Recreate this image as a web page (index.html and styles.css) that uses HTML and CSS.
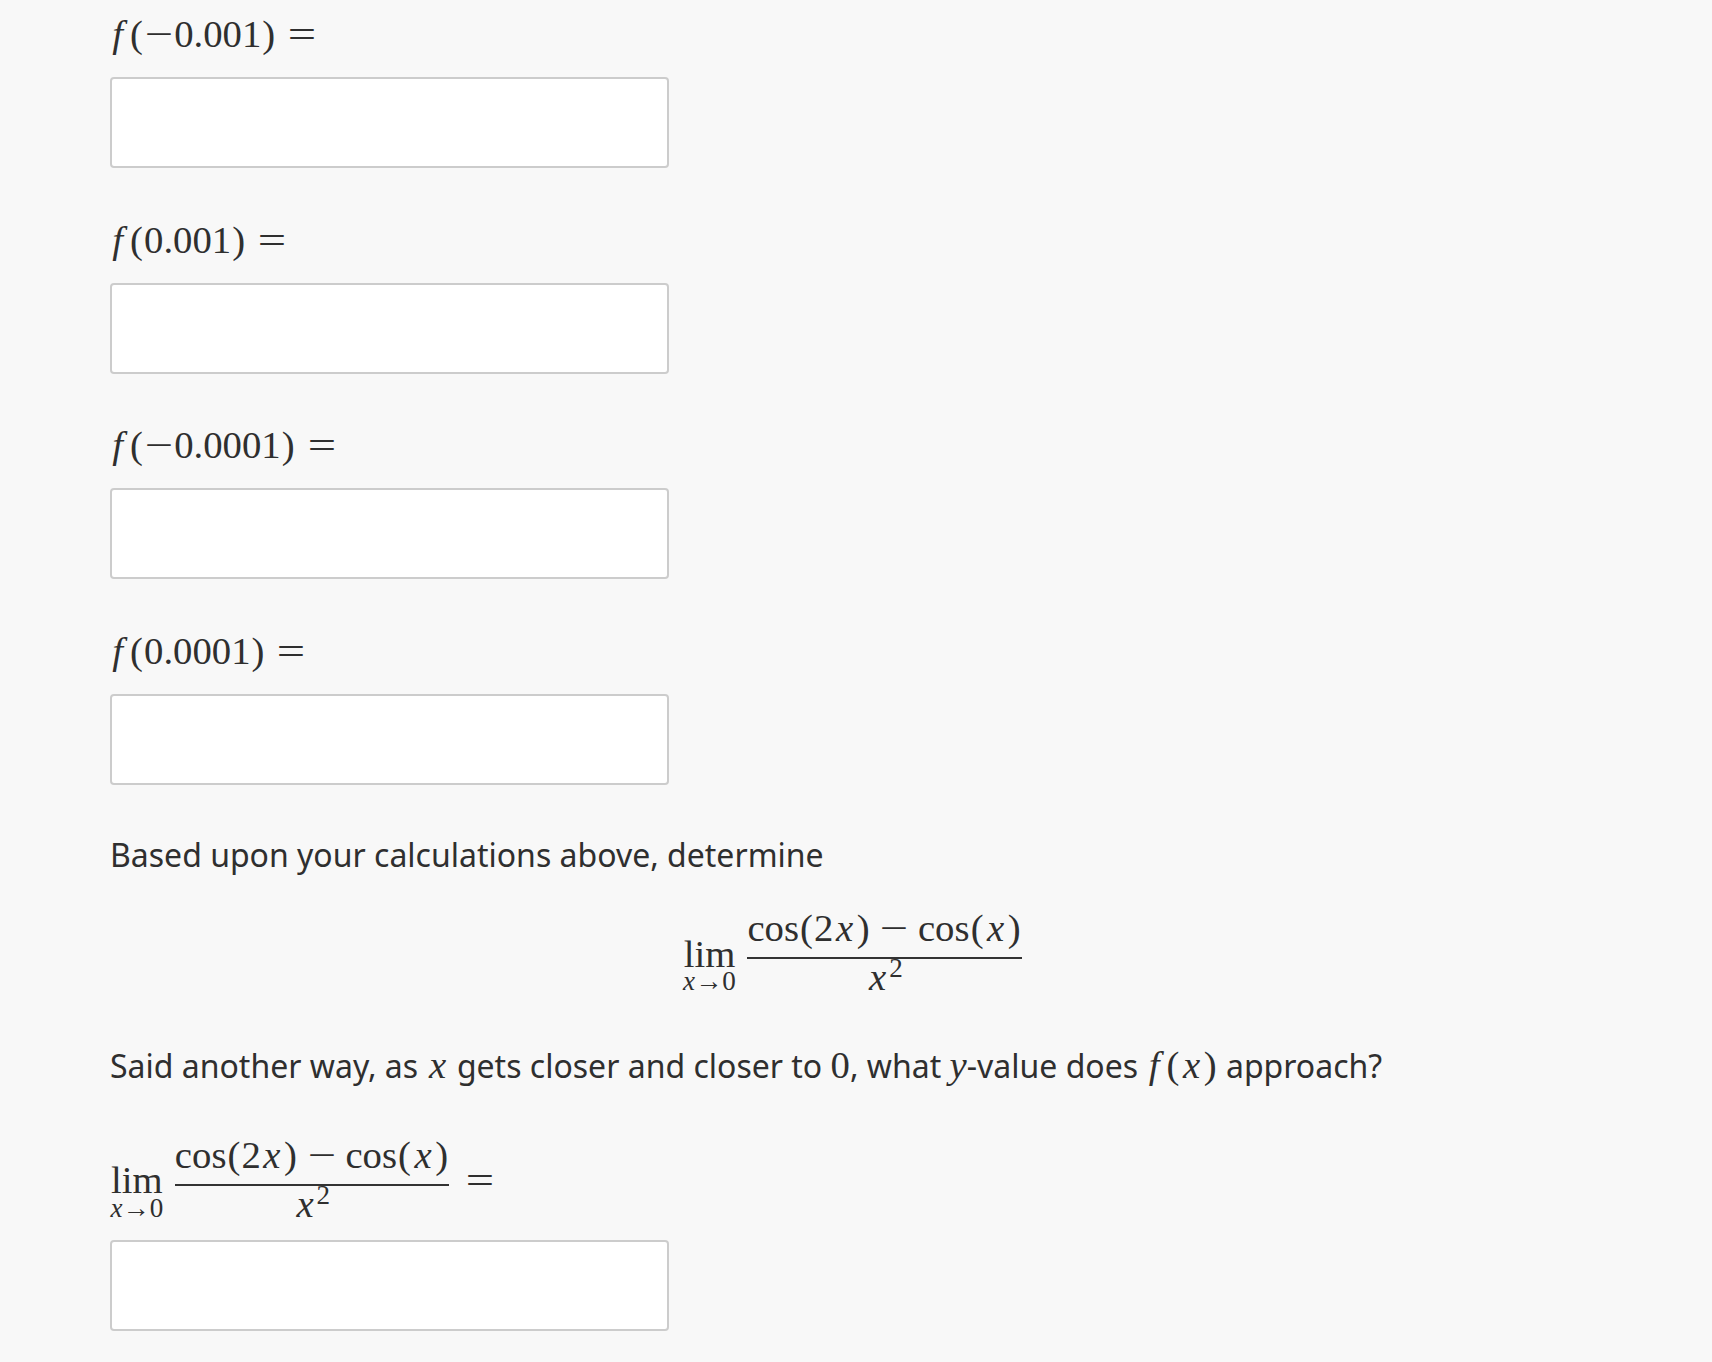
FILE: index.html
```html
<!DOCTYPE html>
<html lang="en">
<head>
<meta charset="utf-8">
<title>Limit exploration</title>
<link rel="stylesheet" href="styles.css">
</head>
<body>
<main class="page">
  <div class="q">
    <div class="label"><span class="mf">f</span><span class="mp">(</span><span class="mminus"><span class="g">−</span></span>0.001<span class="mp">)</span><span class="mrel"><span class="g">=</span></span></div>
    <input class="answer" type="text" aria-label="f(-0.001)">
  </div>
  <div class="q">
    <div class="label"><span class="mf">f</span><span class="mp">(</span>0.001<span class="mp">)</span><span class="mrel"><span class="g">=</span></span></div>
    <input class="answer" type="text" aria-label="f(0.001)">
  </div>
  <div class="q">
    <div class="label"><span class="mf">f</span><span class="mp">(</span><span class="mminus"><span class="g">−</span></span>0.0001<span class="mp">)</span><span class="mrel"><span class="g">=</span></span></div>
    <input class="answer" type="text" aria-label="f(-0.0001)">
  </div>
  <div class="q">
    <div class="label"><span class="mf">f</span><span class="mp">(</span>0.0001<span class="mp">)</span><span class="mrel"><span class="g">=</span></span></div>
    <input class="answer" type="text" aria-label="f(0.0001)">
  </div>

  <p class="text text-based">Based upon your calculations above, determine</p>

  <div class="display">
    <div class="eq">
      <div class="lim"><span class="lim-word">lim</span><span class="lim-sub"><span class="mi">x</span>→0</span></div>
      <div class="frac">
        <div class="num">cos<span class="mp">(</span>2<span class="mx">x</span><span class="mp">)</span><span class="mbin"><span class="g">−</span></span>cos<span class="mp">(</span><span class="mx">x</span><span class="mp">)</span></div>
        <div class="bar"></div>
        <div class="den"><span class="mx">x</span><span class="sup">2</span></div>
      </div>
    </div>
  </div>

  <p class="text text-said">Said another way, as <span class="m"><span class="mx">x</span></span> gets closer and closer to <span class="m">0</span>, what <span class="m"><span class="mi">y</span></span>-value does <span class="m"><span class="mf">f</span><span class="mp">(</span><span class="mx">x</span><span class="mp">)</span></span> approach?</p>

  <div class="eq eq-final">
    <div class="lim"><span class="lim-word">lim</span><span class="lim-sub"><span class="mi">x</span>→0</span></div>
    <div class="frac">
      <div class="num">cos<span class="mp">(</span>2<span class="mx">x</span><span class="mp">)</span><span class="mbin"><span class="g">−</span></span>cos<span class="mp">(</span><span class="mx">x</span><span class="mp">)</span></div>
      <div class="bar"></div>
      <div class="den"><span class="mx">x</span><span class="sup">2</span></div>
    </div>
    <div class="rel"><span class="g">=</span></div>
  </div>
  <input class="answer answer-final" type="text" aria-label="limit value">
</main>
</body>
</html>
```

FILE: styles.css
```css
html, body {
  margin: 0;
  padding: 0;
}

body {
  background: #f8f8f8;
  color: #2f2f2f;
  font-family: "Noto Sans", "Open Sans", sans-serif;
  font-size: 32px;
}

.page {
  padding: 10px 113px 40px 110px;
}

/* ---------- math primitives ---------- */
.label,
.m,
.lim-word,
.lim-sub,
.frac,
.rel {
  font-family: "Liberation Serif", "DejaVu Serif", serif;
}

.m {
  font-size: 1.21em;
  line-height: 1;
}

.mi {
  font-style: italic;
}

.mx {
  display: inline-block;
  width: 0.572em;
  text-align: center;
  font-style: italic;
}

.mf {
  display: inline-block;
  width: 0.49em;
  padding-left: 0.06em;
  box-sizing: border-box;
  font-style: italic;
}

.mp {
  display: inline-block;
  width: 0.389em;
  text-align: center;
}

.g {
  display: inline-block;
  transform: scaleX(1.3);
}

.mminus {
  display: inline-block;
  width: 0.778em;
  text-align: center;
}

.mbin {
  display: inline-block;
  width: 0.778em;
  margin: 0 0.222em;
  text-align: center;
}

.mrel {
  display: inline-block;
  width: 0.778em;
  margin-left: 0.2778em;
  text-align: center;
}

/* ---------- question blocks ---------- */
.q + .q {
  margin-top: 47.5px;
}

.label {
  font-size: 38.72px;
  line-height: 48px;
  height: 48px;
  white-space: nowrap;
}

.answer {
  display: block;
  box-sizing: border-box;
  width: 559px;
  height: 91px;
  margin: 19px 0 0;
  padding: 0 16px;
  background: #ffffff;
  border: 2px solid #cccccc;
  border-radius: 4px;
  font: inherit;
  color: inherit;
  outline: none;
}

.text {
  margin: 0;
  line-height: 48px;
}

.text-based {
  margin-top: 46px;
}

.text-said {
  margin-top: 44.6px;
}

/* ---------- display equations ---------- */
.display {
  margin-top: 30.7px;
  display: flex;
  justify-content: center;
}

.eq {
  display: flex;
  align-items: flex-start;
}

.eq-final {
  margin-top: 46px;
}

.lim {
  display: flex;
  flex-direction: column;
  align-items: center;
  margin-top: 29.35px;
  margin-right: 6.45px;
}

.lim-word {
  display: block;
  width: 1.389em;
  text-align: center;
  font-size: 38.72px;
  line-height: 30px;
}

.lim-sub {
  display: block;
  font-size: 27.1px;
  line-height: 22px;
  margin-top: 1.9px;
  white-space: nowrap;
}

.frac {
  display: flex;
  flex-direction: column;
  align-items: center;
  padding: 0 4.65px;
  font-size: 38.72px;
}

.num {
  line-height: 38.72px;
  white-space: nowrap;
}

.bar {
  align-self: stretch;
  height: 2px;
  margin-top: 9.3px;
  background: #333333;
}

.den {
  line-height: 38.72px;
  margin-top: -1px;
  white-space: nowrap;
}

.sup {
  display: inline-block;
  margin-left: 0.02em;
  font-size: 0.7em;
  line-height: 0;
  vertical-align: 13px;
}

.rel {
  width: 0.778em;
  margin-top: 25px;
  margin-left: 10.75px;
  text-align: center;
  font-size: 38.72px;
  line-height: 38.72px;
}

.answer-final {
  margin-top: 16.7px;
}
```
